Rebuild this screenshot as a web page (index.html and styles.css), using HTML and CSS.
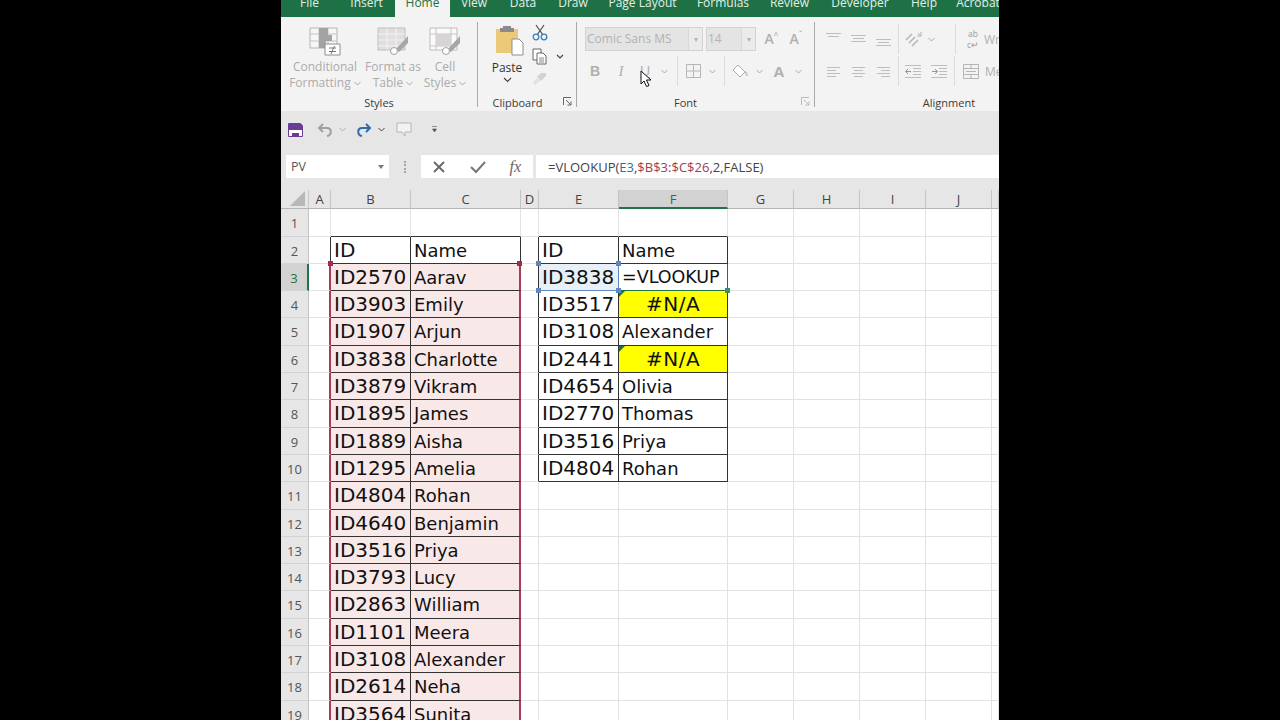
FILE: index.html
```html
<!DOCTYPE html>
<html lang="en">
<head>
<meta charset="utf-8">
<title>Excel VLOOKUP</title>
<link rel="stylesheet" href="styles.css">
</head>
<body>
<div class="app">
  <nav class="tabs">
    <span>File</span><span>Insert</span><span class="active">Home</span><span>View</span><span>Data</span><span>Draw</span><span>Page Layout</span><span>Formulas</span><span>Review</span><span>Developer</span><span>Help</span><span>Acrobat</span>
  </nav>

  <section class="ribbon">
    <div class="group g-styles">
      <div class="g-body styles-body">
        <div class="big w-cf">
          <svg class="big-ic" width="32" height="29" viewBox="0 0 32 29"><path d="M1 1h27v20H1z" fill="#f6f6f6" stroke="#b4b4b4"/><path d="M1 7h27M1 14h27M10 1v20M19 1v20" stroke="#c4c4c4" fill="none"/><path d="M10 1h9v7h4v6h-6v7h-7z" fill="#a3a3a3"/><path d="M16 17h15v11H16z" fill="#fff" stroke="#8e8e8e"/><path d="M20 21h7M20 24.500h7M25.500 19l-3.500 8" stroke="#777" fill="none"/></svg>
          <span>Conditional</span><span>Formatting <svg class="chev" width="7" height="5" viewBox="0 0 7 5"><path d="M.5 1l3 3 3-3" fill="none" stroke="#aaa"/></svg></span>
        </div>
        <div class="big w-ft">
          <svg class="big-ic" width="32" height="29" viewBox="0 0 32 29"><path d="M1 1h27v22H1z" fill="#e2dede" stroke="#bdbdbd"/><path d="M1 7h27M1 13h27M1 19h27M10 1v22M19 1v22" stroke="#f2f2f2" fill="none"/><path d="M31 9L19 22l3 3L31 16z" fill="#a6a6a6"/><circle cx="17" cy="24" r="3.500" fill="#fff" stroke="#a0a0a0"/></svg>
          <span>Format as</span><span>Table <svg class="chev" width="7" height="5" viewBox="0 0 7 5"><path d="M.5 1l3 3 3-3" fill="none" stroke="#aaa"/></svg></span>
        </div>
        <div class="big w-cs">
          <svg class="big-ic" width="32" height="29" viewBox="0 0 32 29"><path d="M1 1h27v22H1z" fill="#fafafa" stroke="#bdbdbd"/><path d="M1 7h27M1 19h27M7 1v22M22 1v22" stroke="#c6c6c6" fill="none"/><path d="M7 7h15v12H7z" fill="#d8d4d6"/><path d="M31 9L19 22l3 3L31 16z" fill="#a6a6a6"/><circle cx="17" cy="24" r="3.500" fill="#fff" stroke="#a0a0a0"/></svg>
          <span>Cell</span><span>Styles <svg class="chev" width="7" height="5" viewBox="0 0 7 5"><path d="M.5 1l3 3 3-3" fill="none" stroke="#aaa"/></svg></span>
        </div>
      </div>
      <div class="g-label">Styles</div>
    </div>

    <div class="group g-clip">
      <div class="g-body clip-body">
        <div class="paste">
          <svg class="paste-ic" width="29" height="31" viewBox="0 0 29 31"><path d="M1 4h22v24H1z" fill="#ecc979"/><path d="M8 1h8v2h3v4H5V3h3z" fill="#8a8a8a"/><path d="M17 14h7l4 4v12H17z" fill="#fff" stroke="#8f8f8f"/></svg>
          <span class="paste-t">Paste</span>
          <svg width="9" height="6" viewBox="0 0 9 6"><path d="M1 1l3.500 3.500L8 1" fill="none" stroke="#444" stroke-width="1.200"/></svg>
        </div>
        <div class="clip-col">
          <svg width="16" height="17" viewBox="0 0 16 17"><path d="M4 1l7 10M12 1L5 11" stroke="#555" stroke-width="1.300" fill="none"/><circle cx="4" cy="13" r="2.800" fill="none" stroke="#3f7fbf" stroke-width="1.300"/><circle cx="12" cy="13" r="2.800" fill="none" stroke="#3f7fbf" stroke-width="1.300"/></svg>
          <div class="copy-row">
            <svg width="16" height="17" viewBox="0 0 16 17"><path d="M1 1h8v11H1z" fill="#fff" stroke="#666"/><path d="M5 5h6l3 3v8H5z" fill="#fff" stroke="#666"/><path d="M7 10h5M7 12h5M7 14h5" stroke="#888"/></svg>
            <svg width="8" height="5" viewBox="0 0 8 5"><path d="M1 1l3 3 3-3" fill="none" stroke="#444" stroke-width="1.100"/></svg>
          </div>
          <svg width="15" height="14" viewBox="0 0 15 14"><path d="M14 1L9 1 5 5l4 4 5-5z" fill="#d2d2d2"/><path d="M5 6L1 10l2 3 5-4z" fill="#e2e2e2"/></svg>
        </div>
      </div>
      <div class="g-label">Clipboard</div>
      <svg class="launch" width="9" height="9" viewBox="0 0 9 9"><path d="M.5 8V.5H8M3 3l5 5M8 4.500V8H4.500" fill="none" stroke="#666"/></svg>
    </div>

    <div class="group g-font">
      <div class="g-body rows">
        <div class="tool-row">
          <div class="combo w-fname"><span>Comic Sans MS</span><i class="combo-btn">&#9662;</i></div>
          <div class="combo w-fsize"><span>14</span><i class="combo-btn">&#9662;</i></div>
          <span class="aa w-a1">A<sup>^</sup></span>
          <span class="aa w-a2">A<sup>&#711;</sup></span>
        </div>
        <div class="tool-row">
          <b class="fmt w20">B</b>
          <i class="fmt fmt-i w32">I</i>
          <u class="fmt w16">U</u>
          <span class="slot w22"><svg class="chev" width="7" height="5" viewBox="0 0 7 5"><path d="M.5 1l3 3 3-3" fill="none" stroke="#aaa"/></svg></span>
          <span class="vsep m2"></span>
          <span class="slot w28"><svg width="15" height="14" viewBox="0 0 15 14"><path d="M.5.5h14v13H.5zM7.500.5v13M.5 7h14" fill="none" stroke="#b5b5b5"/></svg></span>
          <span class="slot w10"><svg class="chev" width="7" height="5" viewBox="0 0 7 5"><path d="M.5 1l3 3 3-3" fill="none" stroke="#aaa"/></svg></span>
          <span class="vsep m6"></span>
          <span class="slot w28"><svg width="17" height="15" viewBox="0 0 17 15"><path d="M7 1l7 7-5 5-7-7z" fill="#fff" stroke="#aaa"/><path d="M14 8c2 1 2 3 2 4" stroke="#c8c8c8" stroke-width="2" fill="none"/></svg></span>
          <span class="slot w12"><svg class="chev" width="7" height="5" viewBox="0 0 7 5"><path d="M.5 1l3 3 3-3" fill="none" stroke="#aaa"/></svg></span>
          <b class="fmt fmt-a w28">A</b>
          <span class="slot w10"><svg class="chev" width="7" height="5" viewBox="0 0 7 5"><path d="M.5 1l3 3 3-3" fill="none" stroke="#aaa"/></svg></span>
        </div>
      </div>
      <div class="g-label">Font</div>
      <svg class="launch" width="9" height="9" viewBox="0 0 9 9"><path d="M.5 8V.5H8M3 3l5 5M8 4.500V8H4.500" fill="none" stroke="#bbb"/></svg>
    </div>

    <div class="group g-align">
      <div class="g-body rows align-rows">
        <div class="tool-row">
          <span class="slot w25"><svg width="15" height="14" viewBox="0 0 15 14"><path d="M0 1.500h15M2 4.500h11" stroke="#bdbdbd" fill="none"/></svg></span>
          <span class="slot w25"><svg width="15" height="14" viewBox="0 0 15 14"><path d="M0 3.500h15M2 6.500h11M0 9.500h15" stroke="#bdbdbd" fill="none"/></svg></span>
          <span class="slot w25"><svg width="15" height="14" viewBox="0 0 15 14"><path d="M0 7.500h15M2 10.500h11M0 13.500h15" stroke="#bdbdbd" fill="none"/></svg></span>
          <span class="vsep m2"></span>
          <span class="slot w26"><svg width="18" height="16" viewBox="0 0 18 16"><path d="M2 9l6-6M5 12l6-6M8 15l6-6" stroke="#b0b0b0" stroke-width="1.400" fill="none"/><path d="M14 2l3 3M17 1v4h-4" stroke="#b0b0b0" fill="none"/></svg></span>
          <span class="slot w10"><svg class="chev" width="7" height="5" viewBox="0 0 7 5"><path d="M.5 1l3 3 3-3" fill="none" stroke="#aaa"/></svg></span>
          <span class="vsep m18"></span>
          <span class="slot wrap-ic">ab<br>c&#8629;</span>
          <span class="cut">Wrap Text</span>
        </div>
        <div class="tool-row">
          <span class="slot w25"><svg width="15" height="11" viewBox="0 0 15 11"><path d="M1 1.500h13M1 4.500h9M1 7.500h13M1 10.500h9" stroke="#bdbdbd" fill="none"/></svg></span>
          <span class="slot w25"><svg width="15" height="11" viewBox="0 0 15 11"><path d="M1 1.500h13M3 4.500h9M1 7.500h13M3 10.500h9" stroke="#bdbdbd" fill="none"/></svg></span>
          <span class="slot w25"><svg width="15" height="11" viewBox="0 0 15 11"><path d="M1 1.500h13M5 4.500h9M1 7.500h13M5 10.500h9" stroke="#bdbdbd" fill="none"/></svg></span>
          <span class="vsep m2"></span>
          <span class="slot w26"><svg width="16" height="14" viewBox="0 0 16 14"><path d="M0 1.500h16M8 4.500h8M8 7.500h8M8 10.500h8M0 13.500h16" stroke="#bdbdbd" fill="none"/><path d="M6 7.500H1M3 5L.5 7.500 3 10" stroke="#7f97b5" fill="none"/></svg></span>
          <span class="slot w26"><svg width="16" height="14" viewBox="0 0 16 14"><path d="M0 1.500h16M8 4.500h8M8 7.500h8M8 10.500h8M0 13.500h16" stroke="#bdbdbd" fill="none"/><path d="M1 7.500h5M4 5l2.500 2.500L4 10" stroke="#7f97b5" fill="none"/></svg></span>
          <span class="vsep m2"></span>
          <span class="slot w24 ml3"><svg width="16" height="15" viewBox="0 0 16 15"><path d="M.5.500h15v14H.5zM.5 4.500h15M.5 10.500h15M8 .5v4M8 10.500v4M3 7.500h10" fill="none" stroke="#b5b5b5"/></svg></span>
          <span class="cut">Merge</span>
        </div>
      </div>
      <div class="g-label g-label-align">Alignment</div>
    </div>
  </section>

  <section class="qat">
    <svg class="q-save" width="15" height="14" viewBox="0 0 15 14"><path d="M.5.500h12l2 2v11H.5z" fill="#fff" stroke="#6a3c99"/><path d="M1 1h13v6H1z" fill="#6a3c99"/><path d="M4 10h7v4H4z" fill="#6a3c99"/></svg>
    <svg class="q-undo" width="16" height="14" viewBox="0 0 16 14"><path d="M6 1L2 5l4 4M2 5h8c5 0 5 7 0 8" fill="none" stroke="#a0a0a0" stroke-width="2"/></svg>
    <svg class="q-chev" width="7" height="5" viewBox="0 0 7 5"><path d="M.5 1l3 3 3-3" fill="none" stroke="#b0b0b0"/></svg>
    <svg class="q-redo" width="16" height="14" viewBox="0 0 16 14"><path d="M10 1l4 4-4 4M14 5H6c-5 0-5 7 0 8" fill="none" stroke="#2f6ca8" stroke-width="2"/></svg>
    <svg class="q-chev2" width="7" height="5" viewBox="0 0 7 5"><path d="M.5 1l3 3 3-3" fill="none" stroke="#444"/></svg>
    <svg class="q-cmt" width="16" height="15" viewBox="0 0 16 15"><path d="M1 1h14v9H9v4L6 10H1z" fill="#f2f2f2" stroke="#b5b5b5"/></svg>
    <svg class="q-more" width="5" height="7" viewBox="0 0 5 7"><path d="M0 .5h5M.5 3h4L2.500 6z" fill="#555" stroke="#555" stroke-width=".6"/></svg>
  </section>

  <section class="fbar">
    <div class="namebox"><span>PV</span><i class="nb-arrow"></i></div>
    <div class="dots"></div>
    <div class="fbtns">
      <svg width="14" height="14" viewBox="0 0 14 14"><path d="M2 2l10 10M12 2L2 12" stroke="#666" stroke-width="1.800"/></svg>
      <svg width="16" height="14" viewBox="0 0 16 14"><path d="M1 7l5 5 9-10" stroke="#777" stroke-width="2" fill="none"/></svg>
      <span class="fx">fx</span>
    </div>
    <div class="fbox">=VLOOKUP(<span class="ref-e">E3</span>,<span class="ref-b">$B$3:$C$26</span>,2,FALSE)</div>
  </section>

  <section class="sheet">
    <div class="row headrow">
      <div class="corner"><svg width="15" height="15" viewBox="0 0 15 15"><path d="M15 0v15H0z" fill="#b8b8b8"/></svg></div>
      <div class="ch">A</div><div class="ch">B</div><div class="ch">C</div><div class="ch">D</div><div class="ch">E</div><div class="ch ch-sel">F</div><div class="ch">G</div><div class="ch">H</div><div class="ch">I</div><div class="ch">J</div><div class="ch"></div>
    </div>
    <div class="row"><div class="rh">1</div><div class="c"></div><div class="c db"></div><div class="c db"></div><div class="c"></div><div class="c db"></div><div class="c db"></div><div class="c"></div><div class="c"></div><div class="c"></div><div class="c"></div><div class="c"></div></div>
    <div class="row"><div class="rh">2</div><div class="c dr"></div><div class="c dr db id">ID</div><div class="c dr db nm">Name</div><div class="c dr"></div><div class="c dr db id">ID</div><div class="c dr db nm">Name</div><div class="c"></div><div class="c"></div><div class="c"></div><div class="c"></div><div class="c"></div></div>
    <div class="row"><div class="rh rh-sel">3</div><div class="c pr"></div><div class="c pk dr id">ID2570<i class="h h-tl h-red"></i></div><div class="c pk pr nm">Aarav<i class="h h-tr h-red"></i></div><div class="c dr"></div><div class="c sel-e id">ID3838<i class="h h-tl h-blue"></i><i class="h h-tr h-blue"></i><i class="h h-bl h-blue"></i><i class="h h-br h-blue"></i></div><div class="c sel-f nm">=VLOOKUP<i class="h h-br h-green"></i></div><div class="c"></div><div class="c"></div><div class="c"></div><div class="c"></div><div class="c"></div></div>
    <div class="row"><div class="rh">4</div><div class="c pr"></div><div class="c pk dr id">ID3903</div><div class="c pk pr nm">Emily</div><div class="c dr"></div><div class="c dr db id">ID3517</div><div class="c nm yl"><i class="tri"></i>#N/A</div><div class="c"></div><div class="c"></div><div class="c"></div><div class="c"></div><div class="c"></div></div>
    <div class="row"><div class="rh">5</div><div class="c pr"></div><div class="c pk dr id">ID1907</div><div class="c pk pr nm">Arjun</div><div class="c dr"></div><div class="c dr db id">ID3108</div><div class="c dr db nm">Alexander</div><div class="c"></div><div class="c"></div><div class="c"></div><div class="c"></div><div class="c"></div></div>
    <div class="row"><div class="rh">6</div><div class="c pr"></div><div class="c pk dr id">ID3838</div><div class="c pk pr nm">Charlotte</div><div class="c dr"></div><div class="c dr db id">ID2441</div><div class="c nm yl"><i class="tri"></i>#N/A</div><div class="c"></div><div class="c"></div><div class="c"></div><div class="c"></div><div class="c"></div></div>
    <div class="row"><div class="rh">7</div><div class="c pr"></div><div class="c pk dr id">ID3879</div><div class="c pk pr nm">Vikram</div><div class="c dr"></div><div class="c dr db id">ID4654</div><div class="c dr db nm">Olivia</div><div class="c"></div><div class="c"></div><div class="c"></div><div class="c"></div><div class="c"></div></div>
    <div class="row"><div class="rh">8</div><div class="c pr"></div><div class="c pk dr id">ID1895</div><div class="c pk pr nm">James</div><div class="c dr"></div><div class="c dr db id">ID2770</div><div class="c dr db nm">Thomas</div><div class="c"></div><div class="c"></div><div class="c"></div><div class="c"></div><div class="c"></div></div>
    <div class="row"><div class="rh">9</div><div class="c pr"></div><div class="c pk dr id">ID1889</div><div class="c pk pr nm">Aisha</div><div class="c dr"></div><div class="c dr db id">ID3516</div><div class="c dr db nm">Priya</div><div class="c"></div><div class="c"></div><div class="c"></div><div class="c"></div><div class="c"></div></div>
    <div class="row"><div class="rh">10</div><div class="c pr"></div><div class="c pk dr id">ID1295</div><div class="c pk pr nm">Amelia</div><div class="c dr"></div><div class="c dr db id">ID4804</div><div class="c dr db nm">Rohan</div><div class="c"></div><div class="c"></div><div class="c"></div><div class="c"></div><div class="c"></div></div>
    <div class="row"><div class="rh">11</div><div class="c pr"></div><div class="c pk dr id">ID4804</div><div class="c pk pr nm">Rohan</div><div class="c"></div><div class="c"></div><div class="c"></div><div class="c"></div><div class="c"></div><div class="c"></div><div class="c"></div><div class="c"></div></div>
    <div class="row"><div class="rh">12</div><div class="c pr"></div><div class="c pk dr id">ID4640</div><div class="c pk pr nm">Benjamin</div><div class="c"></div><div class="c"></div><div class="c"></div><div class="c"></div><div class="c"></div><div class="c"></div><div class="c"></div><div class="c"></div></div>
    <div class="row"><div class="rh">13</div><div class="c pr"></div><div class="c pk dr id">ID3516</div><div class="c pk pr nm">Priya</div><div class="c"></div><div class="c"></div><div class="c"></div><div class="c"></div><div class="c"></div><div class="c"></div><div class="c"></div><div class="c"></div></div>
    <div class="row"><div class="rh">14</div><div class="c pr"></div><div class="c pk dr id">ID3793</div><div class="c pk pr nm">Lucy</div><div class="c"></div><div class="c"></div><div class="c"></div><div class="c"></div><div class="c"></div><div class="c"></div><div class="c"></div><div class="c"></div></div>
    <div class="row"><div class="rh">15</div><div class="c pr"></div><div class="c pk dr id">ID2863</div><div class="c pk pr nm">William</div><div class="c"></div><div class="c"></div><div class="c"></div><div class="c"></div><div class="c"></div><div class="c"></div><div class="c"></div><div class="c"></div></div>
    <div class="row"><div class="rh">16</div><div class="c pr"></div><div class="c pk dr id">ID1101</div><div class="c pk pr nm">Meera</div><div class="c"></div><div class="c"></div><div class="c"></div><div class="c"></div><div class="c"></div><div class="c"></div><div class="c"></div><div class="c"></div></div>
    <div class="row"><div class="rh">17</div><div class="c pr"></div><div class="c pk dr id">ID3108</div><div class="c pk pr nm">Alexander</div><div class="c"></div><div class="c"></div><div class="c"></div><div class="c"></div><div class="c"></div><div class="c"></div><div class="c"></div><div class="c"></div></div>
    <div class="row"><div class="rh">18</div><div class="c pr"></div><div class="c pk dr id">ID2614</div><div class="c pk pr nm">Neha</div><div class="c"></div><div class="c"></div><div class="c"></div><div class="c"></div><div class="c"></div><div class="c"></div><div class="c"></div><div class="c"></div></div>
    <div class="row"><div class="rh">19</div><div class="c pr"></div><div class="c pk dr id">ID3564</div><div class="c pk pr nm">Sunita</div><div class="c"></div><div class="c"></div><div class="c"></div><div class="c"></div><div class="c"></div><div class="c"></div><div class="c"></div><div class="c"></div></div>
  </section>

  <svg class="cursor" width="12" height="18" viewBox="0 0 12 18"><path d="M1 1v13l3-3 2.500 5.500 2.500-1L6.500 10H11z" fill="#fff" stroke="#111"/></svg>
</div>
</body>
</html>
```
FILE: styles.css
```css
* { box-sizing: border-box; }
html, body { margin: 0; height: 100%; background: #000; overflow: hidden; }
body { font-family: "Open Sans", "Noto Sans", sans-serif; }
.app { position: relative; width: 718px; height: 720px; margin-left: 281px; background: #e6e6e6; overflow: hidden; }

/* tabs */
.tabs { display: grid; grid-template-columns: 57px 57px 55px 48px 50px 50px 89px 72px 61px 80px 48px 60px; height: 17px; background: #1e7145; overflow: hidden; }
.tabs span { color: #e4efe8; font-size: 12px; line-height: 5px; text-align: center; white-space: nowrap; }
.tabs .active { background: #f3f3f3; color: #1e7145; }

/* ribbon */
.ribbon { display: flex; height: 94px; background: #f3f3f3; padding-top: 5px; overflow: hidden; }
.group { position: relative; display: flex; flex-direction: column; height: 85px; border-right: 1px solid #a9a9a9; }
.g-styles { width: 197px; }
.g-clip { width: 99px; }
.g-font { width: 238px; }
.g-align { width: 184px; border-right: 0; }
.g-body { flex: 1; min-height: 0; display: flex; }
.g-label { height: 12px; margin-bottom: -2px; line-height: 12px; font-size: 11px; color: #3c3c3c; text-align: center; }
.g-clip .g-label { padding-right: 19px; }
.g-font .g-label { padding-right: 20px; }
.g-label-align { padding-left: 84px; }
.launch { position: absolute; right: 4px; bottom: 1px; }

.styles-body { padding: 5px 0 0 9px; }
.big { display: flex; flex-direction: column; align-items: center; font-size: 12px; line-height: 16px; color: #ababab; white-space: nowrap; }
.big-ic { margin-bottom: 3px; }
.w-cf { width: 70px; }
.w-ft { width: 54px; margin-left: 6px; }
.w-cs { width: 42px; margin-left: 4px; }
.chev { vertical-align: 1px; }

.clip-body { padding: 3px 0 0 15px; }
.paste { display: flex; flex-direction: column; align-items: center; width: 28px; }
.paste-ic { margin-left: 4px; }
.paste-t { margin-top: 3px; font-size: 12px; line-height: 18px; color: #333; }
.clip-col { display: flex; flex-direction: column; align-items: flex-start; gap: 7px; margin: -1px 0 0 11px; }
.copy-row { display: flex; align-items: center; gap: 8px; }

/* tool rows */
.rows { flex-direction: column; gap: 2px; padding: 2px 0 0 8px; }
.align-rows { padding-left: 6px; overflow: hidden; }
.tool-row { display: flex; align-items: center; height: 30px; }
.combo { display: flex; justify-content: space-between; align-items: stretch; height: 24px; background: #e4e4e4; border: 1px solid #d2d2d2; font-size: 12px; line-height: 22px; color: #b3b3b3; padding-left: 1px; }
.combo-btn { width: 14px; border-left: 1px solid #d8d8d8; font-style: normal; font-size: 8px; text-align: center; background: #ebebeb; }
.w-fname { width: 118px; margin-right: 3px; }
.w-fsize { width: 50px; }
.aa { font-size: 14px; font-weight: 600; color: #b0b0b0; text-align: center; line-height: 24px; }
.aa sup { font-size: 8px; line-height: 0; }
.w-a1 { width: 27px; margin-left: 2px; }
.w-a2 { width: 22px; }
.fmt { text-align: center; font-size: 14px; color: #b0b0b0; font-family: "Liberation Sans", sans-serif; }
.fmt-i { font-family: "Liberation Serif", serif; font-size: 15px; }
.fmt-a { font-family: "Open Sans", sans-serif; font-size: 15px; }
.slot { display: flex; justify-content: center; align-items: center; flex: none; }
.w10 { width: 10px; } .w12 { width: 12px; } .w16 { width: 16px; } .w20 { width: 20px; } .w22 { width: 22px; }
.w24 { width: 24px; } .w25 { width: 25px; } .w26 { width: 26px; } .w28 { width: 28px; } .w32 { width: 32px; }
.ml3 { margin-left: 3px; }
.vsep { flex: none; width: 1px; height: 30px; background: #dcdcdc; }
.m2 { margin: 0 1px 0 2px; }
.m6 { margin: 0 0 0 7px; }
.m18 { margin: 0 0 0 19px; }
.wrap-ic { display: block; width: 18px; margin-left: 8px; font-size: 8.5px; line-height: 11px; color: #9a9a9a; text-align: center; }
.cut { margin-left: 2px; font-size: 12px; color: #b0b0b0; white-space: nowrap; }

/* quick access */
.qat { display: flex; align-items: center; height: 35px; padding: 2px 0 0 7px; background: #e6e6e6; }
.q-save { margin-right: 14px; }
.q-undo { margin-right: 6px; }
.q-chev { margin-right: 10px; }
.q-redo { margin-right: 6px; }
.q-chev2 { margin-right: 11px; }
.q-cmt { margin-right: 20px; }

/* formula bar */
.fbar { display: flex; height: 34px; padding-top: 9px; background: #e6e6e6; align-items: flex-start; }
.namebox { position: relative; width: 103px; height: 23px; margin-left: 5px; background: #fff; font-size: 12.5px; line-height: 24px; color: #555; padding-left: 5px; }
.nb-arrow { position: absolute; right: 5px; top: 10px; border: 3.5px solid transparent; border-top: 4px solid #777; border-bottom: 0; }
.dots { width: 2px; height: 12px; margin: 6px 15px 0 15px; border-left: 2px dotted #a5a5a5; }
.fbtns { display: flex; align-items: center; justify-content: space-between; width: 112px; height: 23px; background: #fff; padding: 0 12px 0 11px; }
.fx { font-family: "Liberation Serif", serif; font-style: italic; font-size: 16px; color: #666; }
.fbox { flex: 1; height: 23px; margin-left: 3px; background: #fff; padding-left: 12px; font-size: 13px; line-height: 24px; color: #444; white-space: nowrap; }
.ref-e { color: #2f6da8; }
.ref-b { color: #a33a4e; }

/* sheet */
.sheet { background: #fff; }
.row { display: grid; grid-template-columns: 28px 22px 80px 110px 18px 80px 109px 66px 66px 66px 66px 7px; grid-template-rows: 27.3px; height: 27.3px; }
.headrow { grid-template-rows: 19.3px; height: 29.3px; padding-top: 10px; background: #e6e6e6; }
.corner { display: flex; justify-content: flex-end; align-items: flex-end; padding: 0 3px 2px 0; border-right: 1px solid #c8c8c8; border-bottom: 1px solid #b5b5b5; }
.ch { border-right: 1px solid #c4c4c4; border-bottom: 1px solid #b5b5b5; font-size: 13px; line-height: 18px; text-align: center; color: #444; }
.ch-sel { background: #d2d2d2; border-bottom: 2px solid #217346; color: #217346; }
.rh { background: #e6e6e6; border-right: 1px solid #c4c4c4; border-bottom: 1px solid #d4d4d4; font-size: 13px; line-height: 28px; text-align: center; color: #555; }
.rh-sel { background: #d2d2d2; border-right: 2px solid #217346; color: #217346; }
.c { position: relative; border-right: 1px solid #e2e2e2; border-bottom: 1px solid #e2e2e2; padding-left: 3px; font-family: "DejaVu Sans", sans-serif; color: #111; white-space: nowrap; line-height: 27px; }
.id { font-size: 20px; }
.nm { font-size: 18px; }
.db { border-bottom-color: #333; }
.dr { border-right-color: #333; }
.pk { background: #f9e8e8; border-bottom-color: #333; }
.pr { border-right: 2px solid #a83a5c; }
.sel-e { background: #e7f0f8; border-right-color: #5f87bd; border-bottom-color: #5f87bd; }
.sel-f { font-size: 17.5px; border-right: 1px solid #217346; border-bottom: 1px solid #217346; }
.yl { background: #ff0; padding-left: 0; border-right-color: #333; border-bottom-color: #333; font-size: 20px; letter-spacing: .5px; text-align: center; }
.tri { position: absolute; left: 0; top: 0; border: 3px solid transparent; border-top-color: #217346; border-left-color: #217346; }
.h { position: absolute; width: 5px; height: 5px; z-index: 2; }
.h-tl { left: -3px; top: -3px; }
.h-tr { right: -3px; top: -3px; }
.h-bl { left: -3px; bottom: -3px; }
.h-br { right: -3px; bottom: -3px; }
.h-red { background: #a02c54; }
.h-blue { background: #5f87bd; }
.h-green { background: #3f8f6a; }

.cursor { position: absolute; left: 359px; top: 70px; }
```
